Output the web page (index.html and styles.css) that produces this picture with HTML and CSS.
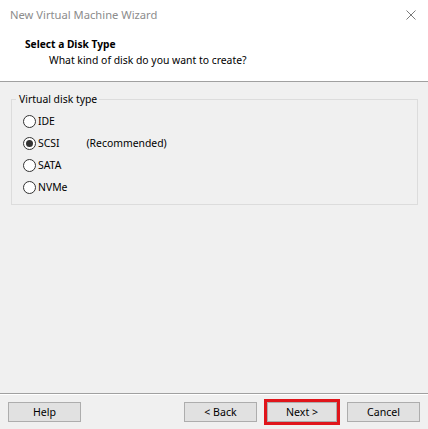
FILE: index.html
```html
<!DOCTYPE html>
<html>
<head>
<meta charset="utf-8">
<link rel="stylesheet" href="styles.css">
</head>
<body>
<div class="window">
  <div class="titlebar">
    <span class="title">New Virtual Machine Wizard</span>
    <svg class="close" width="10" height="10" viewBox="0 0 10 10"><path d="M0.5 0.5 L9.5 9.5 M9.5 0.5 L0.5 9.5" stroke="#7a7a7a" stroke-width="1" fill="none"/></svg>
  </div>
  <div class="header">
    <div class="h-title">Select a Disk Type</div>
    <div class="h-sub">What kind of disk do you want to create?</div>
  </div>
  <div class="content">
    <fieldset class="group">
      <legend class="legend">Virtual disk type</legend>
      <div class="row"><span class="radio"></span><span class="label">IDE</span></div>
      <div class="row"><span class="radio checked"></span><span class="label">SCSI</span><span class="note">(Recommended)</span></div>
      <div class="row"><span class="radio"></span><span class="label">SATA</span></div>
      <div class="row"><span class="radio"></span><span class="label">NVMe</span></div>
    </fieldset>
    <div class="spacer"></div>
    <div class="footer">
      <button class="btn help">Help</button>
      <div class="grow"></div>
      <button class="btn">&lt; Back</button>
      <button class="btn next">Next &gt;</button>
      <button class="btn">Cancel</button>
    </div>
  </div>
</div>
</body>
</html>
```

FILE: styles.css
```css
html, body {
  margin: 0;
  padding: 0;
}
body {
  width: 428px;
  height: 429px;
  overflow: hidden;
  font-family: "Noto Sans", "Open Sans", sans-serif;
  font-size: 10.4px;
  color: #000;
}
.window {
  display: flex;
  flex-direction: column;
  height: 429px;
  background: #f0f0f0;
}
.titlebar {
  height: 30px;
  background: #fff;
  display: flex;
  align-items: center;
  padding: 0 12px 0 10px;
}
.title {
  flex: 1;
  color: #8c8c8c;
  font-size: 11.2px;
  line-height: 16px;
}
.close {
  display: block;
}
.header {
  background: #fff;
  padding: 6px 0 13px 0;
  border-bottom: 1px solid #a0a0a0;
}
.h-title {
  font-weight: bold;
  font-size: 10.2px;
  padding-left: 25px;
  line-height: 16px;
}
.h-sub {
  padding-left: 49px;
  line-height: 16px;
}
.content {
  flex: 1;
  display: flex;
  flex-direction: column;
}
.group {
  margin: 10px 10px 0 11px;
  padding: 4px 0 6px 11px;
  border: 1px solid #dcdcdc;
  min-width: 0;
}
.legend {
  padding: 0 2px 0 3px;
  margin-left: -7px;
  line-height: 14px;
}
.row {
  height: 22px;
  display: flex;
  align-items: center;
}
.radio {
  width: 11px;
  height: 11px;
  border: 1px solid #333;
  border-radius: 50%;
  background: #fff;
  position: relative;
  margin-right: 2px;
  box-sizing: content-box;
}
.radio.checked::after {
  content: "";
  position: absolute;
  left: 2px;
  top: 2px;
  width: 7px;
  height: 7px;
  border-radius: 50%;
  background: #333;
}
.label {
  line-height: 16px;
}
.note {
  margin-left: 27px;
}
.spacer {
  flex: 1;
}
.footer {
  border-top: 1px solid #a0a0a0;
  box-shadow: inset 0 1px 0 #fff;
  display: flex;
  align-items: center;
  padding: 8px 8px 7px 8px;
}
.grow {
  flex: 1;
}
.btn {
  font-family: inherit;
  font-size: 10.6px;
  height: 20px;
  width: 73px;
  padding: 0;
  margin: 0 0 0 10px;
  background: #e1e1e1;
  border: 1px solid #adadad;
  color: #000;
  line-height: 16px;
}
.btn.help {
  margin-left: 0;
}
.btn.next {
  width: 70px;
  outline: 3px solid #e0151b;
  outline-offset: 0;
}
```
